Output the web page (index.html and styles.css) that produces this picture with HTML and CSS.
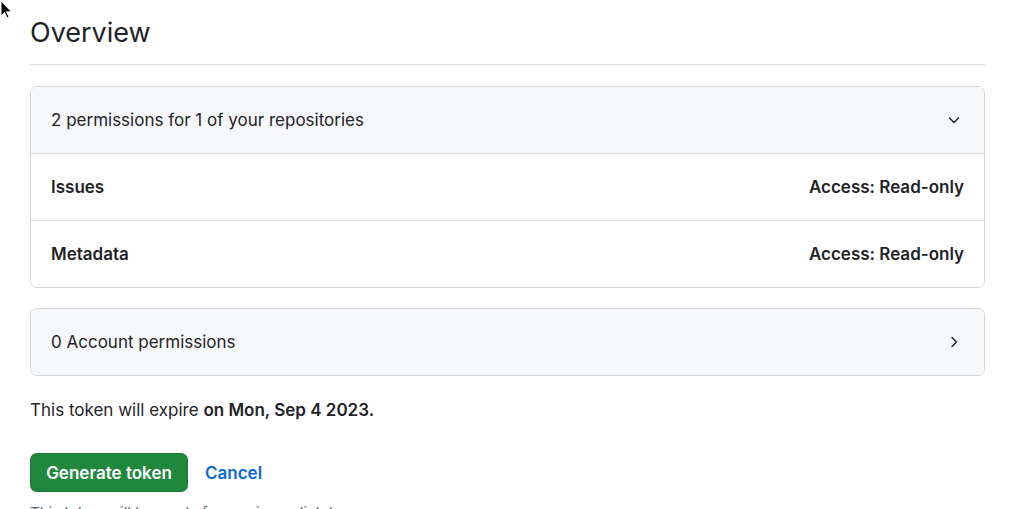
FILE: index.html
```html
<!DOCTYPE html>
<html>
<head>
<meta charset="utf-8">
<link rel="stylesheet" href="styles.css">
</head>
<body>
<svg class="cursor" width="14" height="20" viewBox="0 0 14 20"><path d="M1 1 L1 16 L4.5 12.5 L7 18 L9 17 L6.6 11.8 L11.5 11.8 Z" fill="#000" stroke="#fff" stroke-width="1"/></svg>
<main class="page">
  <h2 class="title">Overview</h2>
  <section class="box">
    <div class="box-header">
      <span>2 permissions for 1 of your repositories</span>
      <svg class="chev" width="16" height="16" viewBox="0 0 16 16"><path d="M3.5 6 L8 10.5 L12.5 6" fill="none" stroke="#1f2328" stroke-width="1.5" stroke-linecap="round" stroke-linejoin="round"/></svg>
    </div>
    <div class="box-row"><span class="bold">Issues</span><span class="bold">Access: Read-only</span></div>
    <div class="box-row"><span class="bold">Metadata</span><span class="bold">Access: Read-only</span></div>
  </section>
  <section class="box box-second">
    <div class="box-header solo">
      <span>0 Account permissions</span>
      <svg class="chev" width="16" height="16" viewBox="0 0 16 16"><path d="M6 3.5 L10.5 8 L6 12.5" fill="none" stroke="#1f2328" stroke-width="1.5" stroke-linecap="round" stroke-linejoin="round"/></svg>
    </div>
  </section>
  <p class="expire">This token will expire <strong>on Mon, Sep 4 2023.</strong></p>
  <div class="actions">
    <button class="btn-primary">Generate token</button>
    <a class="cancel" href="#">Cancel</a>
  </div>
  <p class="note">This token will be ready for use immediately.</p>
</main>
</body>
</html>
```

FILE: styles.css
```css
html, body {
  margin: 0;
  padding: 0;
  background: #ffffff;
  overflow: hidden;
}
body {
  font-family: Inter, "Liberation Sans", Arial, sans-serif;
  color: #1f2328;
  font-size: 17px;
}
.cursor {
  position: absolute;
  left: 0;
  top: 0;
}
.page {
  width: 955px;
  padding: 0 0 0 30px;
}
.title {
  margin: 0;
  padding-top: 16px;
  height: 65px;
  box-sizing: border-box;
  font-size: 27px;
  font-weight: 400;
  line-height: 34px;
  border-bottom: 1px solid #d8dee4;
}
.box {
  margin-top: 21px;
  border: 1px solid #d0d7de;
  border-radius: 7px;
  overflow: hidden;
}
.box-second {
  margin-top: 20px;
}
.box-header {
  display: flex;
  align-items: center;
  justify-content: space-between;
  height: 66px;
  padding: 0 20px;
  background: #f6f8fa;
  border-bottom: 1px solid #d0d7de;
}
.box-header.solo {
  border-bottom: none;
}
.chev {
  margin-right: 2px;
}
.box-row {
  display: flex;
  align-items: center;
  justify-content: space-between;
  height: 66px;
  padding: 0 20px;
  border-top: 1px solid #d8dee4;
}
.box-header + .box-row {
  border-top: none;
}
.bold {
  font-weight: 600;
}
.expire {
  margin: 24px 0 0;
  line-height: 20px;
}
.expire strong {
  font-weight: 600;
}
.actions {
  display: flex;
  align-items: center;
  gap: 17px;
  margin-top: 33px;
}
.btn-primary {
  font-family: inherit;
  font-size: 17px;
  font-weight: 600;
  color: #ffffff;
  background: #1f883d;
  border: 1px solid rgba(31, 35, 40, 0.15);
  border-radius: 7px;
  height: 39px;
  width: 158px;
  padding: 0;
}
.cancel {
  color: #0969da;
  font-weight: 600;
  text-decoration: none;
}
.note {
  margin: 11px 0 0;
  color: #656d76;
  font-size: 15px;
}
```
